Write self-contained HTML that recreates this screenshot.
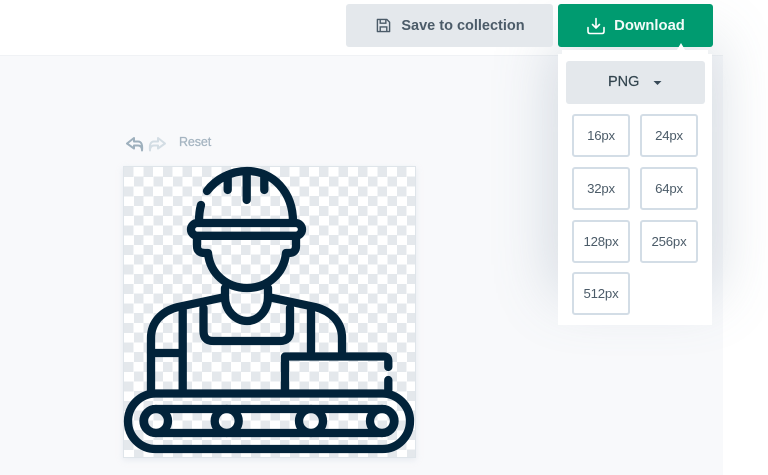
<!DOCTYPE html>
<html><head><meta charset="utf-8"><style>
*{box-sizing:border-box}
html,body{margin:0;padding:0}
body{width:768px;height:475px;overflow:hidden;position:relative;background:#fff;font-family:"Liberation Sans",sans-serif}
div{position:absolute}
.main{left:0;top:55px;width:723px;height:420px;background:#f8f9fb;border-top:1px solid #f0f2f5}
.shadow{left:562px;top:50px;width:146px;height:235px;box-shadow:0 0 60px 8px rgba(120,140,160,.3)}
.hdr{left:0;top:0;width:768px;height:55px;background:#fff}
.btn{top:4px;height:43px;border-radius:3px;display:flex;align-items:center;justify-content:center;font-size:14.5px;font-weight:bold}
.pop{left:558px;top:54px;width:154px;height:271px;background:#fff}
.png{left:566px;top:61px;width:139px;height:43px;background:#e4e8ec;border-radius:3px;color:#33454f;font-size:14.5px;line-height:43px;text-align:left;padding-left:42px;-webkit-text-stroke:.2px #33454f}
.s{height:43px;border:2px solid #d3dde6;border-radius:3px;background:#fff;color:#4b5b68;font-size:13.2px;display:flex;align-items:center;justify-content:center;letter-spacing:-.2px}
.w1{left:572px;width:58px}.w2{left:640px;width:58px}
.box{left:123px;top:166px;width:293px;height:292px;border:1px solid #dfe5ea;box-shadow:0 2px 6px rgba(200,210,220,.35);background-color:#fff;background-image:conic-gradient(#fff 25%,#e4e8ec 0 50%,#fff 0 75%,#e4e8ec 0);background-size:19.5px 19.5px}
</style></head><body>
<div class="main"></div>
<div class="hdr"></div>
<div class="shadow"></div>
<div class="btn" style="left:346px;width:207px;background:#e4e8ec;color:#4b5b68;padding-left:2px">
<svg width="15" height="15" viewBox="0 0 16 16" fill="none" stroke="#4b5b68" stroke-width="1.5" style="margin-right:10px"><path d="M1.500 1.500H11.500L14.500 4.500V14.500H1.500Z" stroke-linejoin="round"/><path d="M4.500 1.500V5.500H10.500V1.500M4.500 14.500V9.500H11.500V14.500"/></svg>Save to collection</div>
<div class="btn" style="left:558px;width:155px;background:#009b70;color:#f2fbf8;font-size:14.8px;padding-left:1px">
<svg width="18" height="18" viewBox="0 0 18 18" fill="none" stroke="#fff" stroke-width="1.6" stroke-linecap="round" stroke-linejoin="round" style="margin-right:9px"><path d="M9 1.500V11M5.500 7.500L9 11L12.500 7.500"/><path d="M1 10.500V14.500Q1 16.500 3 16.500H15Q17 16.500 17 14.500V10.500"/></svg>Download</div>
<div class="pop"></div>
<svg style="position:absolute;left:672px;top:42px" width="18" height="13"><path d="M2 13L9 1L16 13Z" fill="#fff"/></svg>
<div class="png">PNG</div>
<svg style="position:absolute;left:653px;top:80px" width="9" height="6"><path d="M0.500 1H8.500L4.500 5Z" fill="#374957"/></svg>
<div class="s w1" style="top:114px">16px</div><div class="s w2" style="top:114px">24px</div>
<div class="s w1" style="top:167px">32px</div><div class="s w2" style="top:167px">64px</div>
<div class="s w1" style="top:220px">128px</div><div class="s w2" style="top:220px">256px</div>
<div class="s w1" style="top:272px">512px</div>
<svg style="position:absolute;left:125px;top:135px" width="42" height="18" viewBox="0 0 42 18" fill="none" stroke-width="2" stroke-linejoin="round" stroke-linecap="round"><path d="M9 3L2 8.500L9 13.500V10.500H13Q17 10.500 17 15.500Q18 6.500 13 6.500H9Z" stroke="#9eb0bd"/><path d="M33 3L40 8.500L33 13.500V10.500H29Q25 10.500 25 15.500Q24 6.500 29 6.500H33Z" stroke="#d3dde4"/></svg>
<div style="left:179px;top:135px;font-size:12.5px;line-height:14px;color:#a5b5c1;letter-spacing:-.1px;-webkit-text-stroke:.25px #a5b5c1">Reset</div>
<div class="box"></div>
<svg style="position:absolute;left:0;top:0" width="768" height="475" fill="none" stroke="#02233a" stroke-width="8.300" stroke-linecap="round" stroke-linejoin="round">
<path d="M207 191C216 179 231 171 247 171C273 171 293 192 293 222"/>
<path d="M201 205Q199 212 199 222"/>
<path d="M246.700 172V200M227.700 175V190M264.300 175V190"/>
<rect x="191" y="223" width="111" height="12.800" rx="6.400"/>
<path d="M197 238V246Q197 253 205 253H208C210 274 227 288 247 288C267 288 284 274 286 253H289Q296 253 296 246V238"/>
<path d="M225 288V297C225 311 236 321 247 321C258 321 268 311 268 297V288"/>
<path d="M225 297L178 307C162 311 151 322 151 338V390"/>
<path d="M268 297L315 307C331 311 342 322 342 338V352"/>
<path d="M182.700 310V390M311 310V352M151 353H182M203.500 308V331Q203.500 341 213 341H280Q290 341 290 331V308"/>
<path d="M285 390V356.500H384Q388.300 356.500 388.300 361V367M388.300 380V390"/>
<rect x="128" y="393.500" width="282" height="55.500" rx="27.700"/>
<rect x="143.500" y="409" width="251" height="24" rx="12"/>
<circle cx="156" cy="421" r="12"/><circle cx="226.700" cy="421" r="12"/><circle cx="311" cy="421" r="12"/><circle cx="382" cy="421" r="12"/>
</svg>
</body></html>
